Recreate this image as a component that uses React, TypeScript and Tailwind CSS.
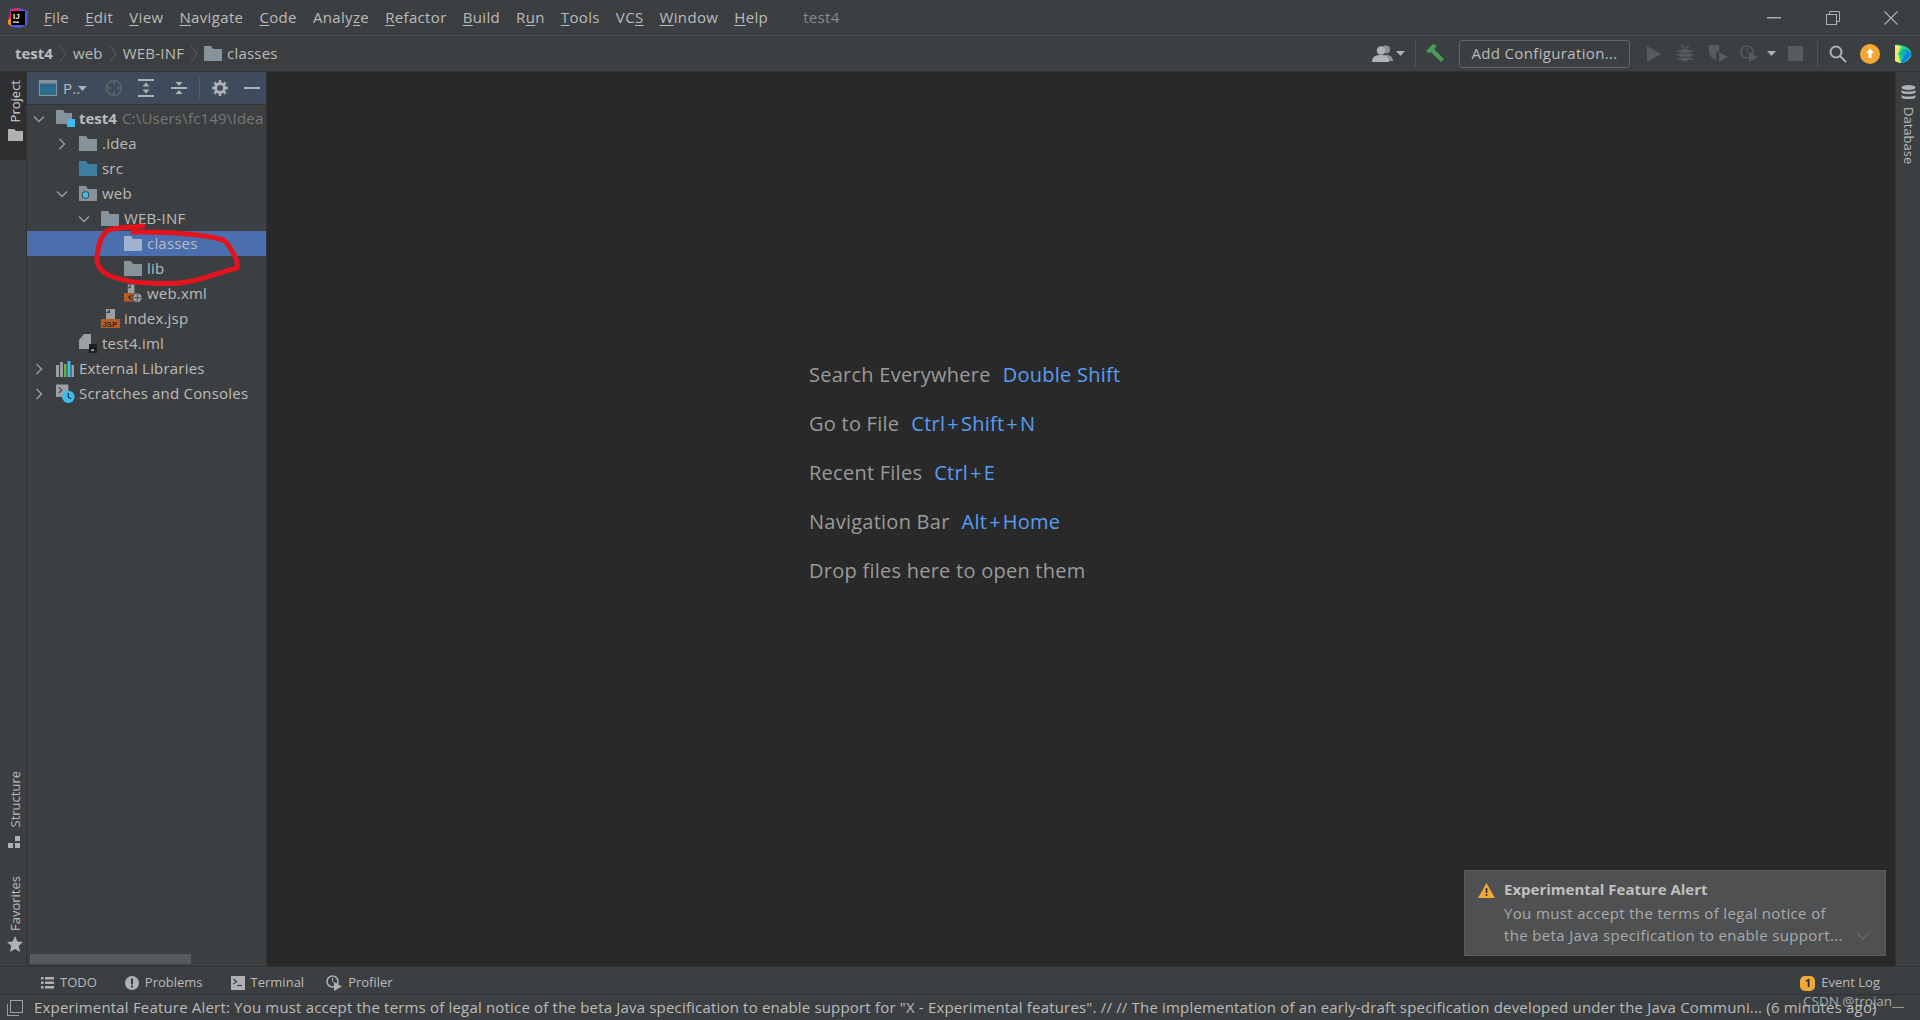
const font = { fontFamily: '"Open Sans", "Noto Sans", sans-serif' };

const Folder = ({ color = "#87939a", className = "" }: { color?: string; className?: string }) => (
  <svg width="18" height="15" viewBox="0 0 18 15" className={className}>
    <path d="M0 0h7l2 3h9v12H0z" fill={color} />
  </svg>
);

const Chevron = ({ open }: { open?: boolean }) => (
  <svg width="16" height="16" viewBox="0 0 16 16" fill="none" stroke="#9da0a2" strokeWidth="1.4">
    {open ? <path d="M3 5.5l5 5 5-5" /> : <path d="M5.5 3l5 5-5 5" />}
  </svg>
);

function Menu({ pre, u, post }: { pre?: string; u: string; post?: string }) {
  return (
    <span className="mr-[16px]">
      {pre}
      <span className="underline underline-offset-2">{u}</span>
      {post}
    </span>
  );
}

function LogoIJ() {
  return (
    <svg width="22" height="22" viewBox="0 0 22 22">
      <path d="M3 2l9-1 9 3-1 14-7 3-9-1z" fill="#4f5bd5" />
      <path d="M1 14L4 2l9-1-1 6-6 9-3 2z" fill="#e6246b" />
      <path d="M1 13l4-2 1 6-2 2-3-2z" fill="#f68a26" />
      <rect x="4" y="4" width="14" height="14" fill="#000" />
      <text x="6" y="12" fontSize="7.5" fontWeight="700" fill="#fff" fontFamily="Liberation Sans">IJ</text>
      <rect x="6" y="14.5" width="6" height="1.2" fill="#fff" />
    </svg>
  );
}

function ProjectIcon() {
  return (
    <svg width="19" height="17" viewBox="0 0 19 17">
      <path d="M0 0h7l2 3h7v11H0z" fill="#87939a" />
      <rect x="11" y="9" width="8" height="8" fill="#3dbdeb" />
    </svg>
  );
}

function WebFolder() {
  return (
    <svg width="18" height="15" viewBox="0 0 18 15">
      <path d="M0 0h7l2 3h9v12H0z" fill="#87939a" />
      <circle cx="6.5" cy="9" r="3.5" fill="#3dbdeb" stroke="#3c3f41" strokeWidth="1" />
    </svg>
  );
}

function XmlIcon() {
  return (
    <svg width="20" height="20" viewBox="0 0 20 20">
      <path d="M4 0h7v9H4z" fill="#9da0a2" />
      <path d="M7 0v4H4z" fill="#3c3f41" />
      <rect x="0" y="9" width="14" height="9" fill="#b85c23" />
      <path d="M8 11l-3 2.5L8 16" stroke="#2e2e2e" strokeWidth="1.3" fill="none" />
      <circle cx="14" cy="14" r="5" fill="#9da0a2" stroke="#3c3f41" />
      <path d="M10 14h8M14 10v8" stroke="#3c3f41" strokeWidth="0.8" />
    </svg>
  );
}

function JspIcon() {
  return (
    <svg width="19" height="20" viewBox="0 0 19 20">
      <path d="M5 0h9v10H5z" fill="#9da0a2" />
      <path d="M9 0v4H5z" fill="#3c3f41" />
      <rect x="0" y="10" width="19" height="9" fill="#b85c23" />
      <text x="1.5" y="17.6" fontSize="7.5" fontWeight="700" fill="#2b2b2b" fontFamily="Liberation Sans">JSP</text>
    </svg>
  );
}

function ImlIcon() {
  return (
    <svg width="18" height="19" viewBox="0 0 18 19">
      <path d="M5 0h7v15H0V6z" fill="#9da0a2" />
      <rect x="10" y="10" width="8" height="9" fill="#1e1e1e" />
      <rect x="12" y="15.5" width="3" height="1.2" fill="#ddd" />
    </svg>
  );
}

function LibIcon() {
  return (
    <svg width="18" height="16" viewBox="0 0 18 16">
      <rect x="0" y="4" width="3" height="12" fill="#9da0a2" />
      <rect x="4" y="1" width="3" height="15" fill="#9da0a2" />
      <rect x="8" y="3" width="2.5" height="13" fill="#62b543" />
      <rect x="11.5" y="0" width="3" height="16" fill="#3dbdeb" />
      <rect x="15.5" y="4" width="2.5" height="12" fill="#9da0a2" />
    </svg>
  );
}

function ScratchIcon() {
  return (
    <svg width="20" height="20" viewBox="0 0 20 20">
      <rect x="0" y="0" width="13" height="13" fill="#9da0a2" />
      <path d="M3 3l3 3-3 3" stroke="#3c3f41" strokeWidth="1.2" fill="none" />
      <circle cx="13" cy="13" r="6.5" fill="#3dbdeb" />
      <path d="M13 9v4.5l3 1.5" stroke="#1e3a4a" strokeWidth="1.3" fill="none" />
    </svg>
  );
}

type Row = { pl: string; label: string; open?: boolean; arrow?: boolean; icon: React.ReactNode; selected?: boolean; bold?: boolean; hint?: string };

const rows: Row[] = [
  { pl: "pl-[4px]", label: "test4", arrow: true, open: true, icon: <ProjectIcon />, bold: true, hint: "C:\\Users\\fc149\\Idea" },
  { pl: "pl-[27px]", label: ".idea", arrow: true, icon: <Folder /> },
  { pl: "pl-[27px]", label: "src", icon: <Folder color="#3d7f9e" /> },
  { pl: "pl-[27px]", label: "web", arrow: true, open: true, icon: <WebFolder /> },
  { pl: "pl-[49px]", label: "WEB-INF", arrow: true, open: true, icon: <Folder /> },
  { pl: "pl-[72px]", label: "classes", icon: <Folder color="#a0b2cf" />, selected: true },
  { pl: "pl-[72px]", label: "lib", icon: <Folder /> },
  { pl: "pl-[72px]", label: "web.xml", icon: <XmlIcon /> },
  { pl: "pl-[49px]", label: "index.jsp", icon: <JspIcon /> },
  { pl: "pl-[27px]", label: "test4.iml", icon: <ImlIcon /> },
  { pl: "pl-[4px]", label: "External Libraries", arrow: true, icon: <LibIcon /> },
  { pl: "pl-[4px]", label: "Scratches and Consoles", arrow: true, icon: <ScratchIcon /> },
];

function TreeRow({ row }: { row: Row }) {
  return (
    <div className={`flex h-[25px] items-center whitespace-nowrap overflow-hidden ${row.pl} ${row.selected ? "bg-[#4b6eaf]" : ""}`}>
      <span className="w-[16px] mr-[9px] shrink-0 flex">{row.arrow && <Chevron open={row.open} />}</span>
      <span className="w-[19px] mr-[4px] shrink-0 flex items-center">{row.icon}</span>
      <span className={row.bold ? "font-bold tracking-normal" : ""}>{row.label}</span>
      {row.hint && <span className="ml-[5px] text-[#787878]">{row.hint}</span>}
    </div>
  );
}

function Hint({ label, keys }: { label: string; keys?: string }) {
  return (
    <div className="h-[49px] leading-[49px] text-[20px] tracking-[0.25px] text-[#9a9a9a] whitespace-nowrap">
      {label}
      {keys && (
        <span className="ml-[12px] text-[#589df6]">
          {keys.split("+").map((part, i) => (
            <span key={part}>
              {i > 0 && <span className="px-[2px]">+</span>}
              {part}
            </span>
          ))}
        </span>
      )}
    </div>
  );
}

function BottomTool({ icon, label, className }: { icon: React.ReactNode; label: string; className: string }) {
  return (
    <div className={`flex items-center gap-[6px] ${className}`}>
      {icon}
      <span>{label}</span>
    </div>
  );
}

const Drop = ({ color = "#afb1b3" }: { color?: string }) => (
  <svg width="9" height="5" viewBox="0 0 9 5"><path d="M0 0h9L4.5 5z" fill={color} /></svg>
);

export default function App() {
  return (
    <div style={font} className="relative w-[1920px] h-[1020px] flex flex-col overflow-hidden bg-[#3c3f41] text-[#bbbbbb] text-[15px] tracking-[0.2px]">
      {/* title bar */}
      <div className="h-[36px] shrink-0 flex items-center border-b border-[#515151] pl-[7px] tracking-[0.35px]">
        <span className="mr-[15px] flex"><LogoIJ /></span>
        <Menu u="F" post="ile" />
        <Menu u="E" post="dit" />
        <Menu u="V" post="iew" />
        <Menu u="N" post="avigate" />
        <Menu u="C" post="ode" />
        <Menu pre="Analy" u="z" post="e" />
        <Menu u="R" post="efactor" />
        <Menu u="B" post="uild" />
        <Menu pre="R" u="u" post="n" />
        <Menu u="T" post="ools" />
        <Menu pre="VC" u="S" />
        <Menu u="W" post="indow" />
        <Menu u="H" post="elp" />
        <span className="ml-[19px] text-[#8a8a8a]">test4</span>
        <div className="ml-auto flex items-center">
          <svg width="14" height="2" className="mr-[45px]"><rect width="14" height="1.4" fill="#b0b0b0" /></svg>
          <svg width="14" height="14" viewBox="0 0 14 14" fill="none" stroke="#b0b0b0" className="mr-[44px]">
            <rect x="0.5" y="3.5" width="10" height="10" />
            <path d="M3.5 3.5v-3h10v10h-3" />
          </svg>
          <svg width="14" height="14" viewBox="0 0 14 14" stroke="#b0b0b0" strokeWidth="1.1" className="mr-[22px]">
            <path d="M0.5 0.5l13 13M13.5 0.5l-13 13" />
          </svg>
        </div>
      </div>

      {/* navigation bar */}
      <div className="h-[36px] shrink-0 flex items-center border-b border-[#323232] pl-[15px] pr-[8px]">
        <span className="font-bold tracking-normal">test4</span>
        <svg width="8" height="20" viewBox="0 0 8 20" fill="none" stroke="#5d6062" className="mx-[6px]"><path d="M1 2l6 8-6 8" /></svg>
        <span>web</span>
        <svg width="8" height="20" viewBox="0 0 8 20" fill="none" stroke="#5d6062" className="mx-[6px]"><path d="M1 2l6 8-6 8" /></svg>
        <span>WEB-INF</span>
        <svg width="8" height="20" viewBox="0 0 8 20" fill="none" stroke="#5d6062" className="mx-[6px]"><path d="M1 2l6 8-6 8" /></svg>
        <Folder className="mr-[5px]" />
        <span>classes</span>

        <div className="ml-auto flex items-center">
          <svg width="23" height="17" viewBox="0 0 23 17" className="mr-[1px]">
            <circle cx="14" cy="4.500" r="4" fill="#8f9193" />
            <path d="M8 16c0-5 3-6 6-6s7 1 7 6z" fill="#8f9193" />
            <circle cx="9" cy="5.500" r="4.200" fill="#afb1b3" />
            <path d="M0 17c0-6 4-7 9-7s8 1 8 7z" fill="#afb1b3" />
          </svg>
          <Drop />
          <span className="w-px h-[26px] bg-[#515151] mx-[10px]" />
          <svg width="19" height="19" viewBox="0 0 19 19" className="mr-[14px]">
            <path d="M0 7L7 0l4 2-3 3 10 10-3 3L5 8 3 9z" fill="#499c54" />
          </svg>
          <div className="w-[171px] h-[28px] border border-[#646464] rounded-[3px] flex items-center justify-center mr-[17px] tracking-[0.35px]">
            Add Configuration...
          </div>
          <svg width="14" height="16" viewBox="0 0 14 16" className="mr-[16px]"><path d="M0 0l14 8-14 8z" fill="#585a5c" /></svg>
          <svg width="16" height="17" viewBox="0 0 16 17" className="mr-[16px]">
            <ellipse cx="8" cy="10" rx="5.500" ry="6.500" fill="#585a5c" />
            <path d="M0 6h16M0 10h16M0 14h16M4 0l3 3M12 0L9 3" stroke="#585a5c" strokeWidth="1.400" />
            <path d="M3 8.200h10M3 12.200h10" stroke="#3c3f41" strokeWidth="0.900" />
          </svg>
          <svg width="19" height="17" viewBox="0 0 19 17" className="mr-[12px]">
            <path d="M0 0h10v6l-3 1v8C3 14 0 10 0 6z" fill="#585a5c" />
            <path d="M10 7l9 5-9 5z" fill="#585a5c" />
          </svg>
          <svg width="18" height="17" viewBox="0 0 18 17" fill="none" className="mr-[9px]">
            <circle cx="7" cy="7" r="6" stroke="#585a5c" strokeWidth="1.600" />
            <path d="M7 3v4l2 2" stroke="#585a5c" />
            <path d="M9 7l9 5-9 5z" fill="#585a5c" />
          </svg>
          <Drop />
          <svg width="15" height="15" className="ml-[12px] mr-[14px]"><rect width="15" height="15" fill="#585a5c" /></svg>
          <span className="w-px h-[26px] bg-[#515151] mr-[11px]" />
          <svg width="18" height="18" viewBox="0 0 18 18" fill="none" stroke="#afb1b3" strokeWidth="2" className="mr-[13px]">
            <circle cx="7" cy="7" r="5.500" />
            <path d="M11 11l6 6" />
          </svg>
          <svg width="20" height="20" viewBox="0 0 20 20" className="mr-[14px]">
            <circle cx="10" cy="10" r="10" fill="#f4a732" />
            <path d="M10 4.500l4 4.500h-2.500v5h-3V9H6z" fill="#fff" />
          </svg>
          <svg width="18" height="20" viewBox="0 0 18 20">
            <path d="M1 1C5 0 12 2 15 5c3 3 3 7 1 9-2 3-6 5-9 5C4 19 1 17 1 17z" fill="#21d789" />
            <path d="M1 1c3 0 5 1 6 2L4 10l3 9c-2 0-6-2-6-2z" fill="#f5e663" />
            <path d="M9 5c3 0 6 1 8 5-1 3-5 8-10 9 2-4 3-9 2-14z" fill="#087cfa" />
            <path d="M5 9l6-4 2 4-4 5z" fill="#12b5a0" />
          </svg>
        </div>
      </div>

      {/* middle */}
      <div className="flex-1 min-h-0 flex">
        <div className="w-[27px] shrink-0 border-r border-[#323232] flex flex-col items-center tracking-normal">
          <div className="w-full h-[88px] bg-[#2d2f30] flex flex-col items-center pt-[8px] pl-[4px] text-[#d0d0d0]">
            <span className="[writing-mode:vertical-rl] rotate-180 text-[13px] leading-none">Project</span>
            <svg width="15" height="12" viewBox="0 0 15 12" className="mt-[7px]"><path d="M0 0h6l2 2h7v10H0z" fill="#afb1b3" /></svg>
          </div>
          <span className="mt-[611px] pr-[4px] [writing-mode:vertical-rl] rotate-180 text-[13px] leading-none">Structure</span>
          <svg width="13" height="12" viewBox="0 0 13 12" className="mt-[8px] ml-[3px]">
            <rect x="7" y="0" width="5" height="5" fill="#afb1b3" />
            <rect x="0" y="7" width="5" height="5" fill="#afb1b3" />
            <rect x="7" y="7" width="5" height="5" fill="#afb1b3" />
          </svg>
          <span className="mt-[28px] pr-[4px] [writing-mode:vertical-rl] rotate-180 text-[13px] leading-none">Favorites</span>
          <svg width="16" height="16" viewBox="0 0 16 16" className="mt-[6px] ml-[3px]">
            <path d="M8 0l2.400 5.400 5.600.6-4.200 3.800L13 16l-5-3-5 3 1.200-6.200L0 6l5.600-.6z" fill="#afb1b3" />
          </svg>
        </div>

        <div className="w-[240px] shrink-0 border-r border-[#323232] flex flex-col relative">
          <div className="h-[33px] shrink-0 bg-[#3d4b5c] border-b border-[#323232] flex items-center pl-[12px]">
            <svg width="18" height="16" viewBox="0 0 18 16" className="mr-[6px]">
              <rect x="0.500" y="0.500" width="17" height="15" fill="#2c6b8e" stroke="#87939a" />
              <rect x="1" y="1" width="16" height="2.500" fill="#87939a" />
            </svg>
            <span>P..</span>
            <span className="-ml-[3px]"><Drop /></span>
            <svg width="18" height="18" viewBox="0 0 18 18" fill="none" stroke="#5f6466" strokeWidth="1.600" className="ml-[18px]">
              <circle cx="9" cy="9" r="7.500" />
              <path d="M9 1v5M9 12v5M1 9h5M12 9h5" />
            </svg>
            <svg width="16" height="18" viewBox="0 0 16 18" className="ml-[15px]">
              <path d="M0 0h16v2H0zM0 16h16v2H0zM8 3.500l3.500 4h-7zM8 14.500l-3.500-4h7z" fill="#afb1b3" />
            </svg>
            <svg width="16" height="16" viewBox="0 0 16 16" className="ml-[17px]">
              <path d="M0 7h16v2H0zM8 6L4.500 2h7zM8 10l3.500 4h-7z" fill="#afb1b3" />
            </svg>
            <span className="w-px h-[24px] bg-[#50596a] ml-[12px]" />
            <svg width="16" height="16" viewBox="0 0 16 16" className="ml-[12px]">
              <circle cx="8" cy="8" r="4.500" fill="none" stroke="#afb1b3" strokeWidth="3" />
              <path d="M8 0v3M8 13v3M0 8h3M13 8h3M2.300 2.300l2 2M11.700 11.700l2 2M13.700 2.300l-2 2M4.300 11.700l-2 2" stroke="#afb1b3" strokeWidth="2.400" />
            </svg>
            <svg width="16" height="2" className="ml-[16px]"><rect width="16" height="2" fill="#afb1b3" /></svg>
          </div>
          <div className="pt-[1px] overflow-hidden">
            {rows.map((row) => (
              <TreeRow key={row.label} row={row} />
            ))}
          </div>
          <div className="mt-auto ml-[3px] mb-[2px] w-[161px] h-[10px] bg-[#585a5c]" />
        </div>

        <div className="flex-1 min-w-0 relative bg-[#292929] pt-[278px] pl-[542px]">
          <Hint label="Search Everywhere" keys="Double Shift" />
          <Hint label="Go to File" keys="Ctrl+Shift+N" />
          <Hint label="Recent Files" keys="Ctrl+E" />
          <Hint label="Navigation Bar" keys="Alt+Home" />
          <Hint label="Drop files here to open them" />

          <div className="absolute right-[9px] bottom-[10px] w-[422px] h-[86px] bg-[#4e5052] border border-[#5a5c5e] pl-[39px] pt-[8px]">
            <svg width="17" height="15" viewBox="0 0 17 15" className="absolute left-[13px] top-[12px]">
              <path d="M8.500 0L17 15H0z" fill="#f2a73b" />
              <rect x="7.700" y="5" width="1.600" height="5" fill="#2b2b2b" />
              <rect x="7.700" y="11" width="1.600" height="1.800" fill="#2b2b2b" />
            </svg>
            <div className="font-bold leading-[20px] text-[#c0c0c0] tracking-normal">Experimental Feature Alert</div>
            <div className="mt-[4px] leading-[21px] text-[#a9abad] whitespace-nowrap tracking-[0.35px]">You must accept the terms of legal notice of</div>
            <div className="mt-[1px] leading-[21px] text-[#a9abad] whitespace-nowrap tracking-[0.35px]">the beta Java specification to enable support...</div>
            <svg width="14" height="8" viewBox="0 0 14 8" fill="none" stroke="#686a6c" strokeWidth="1.400" className="absolute right-[15px] bottom-[15px]">
              <path d="M1 1l6 6 6-6" />
            </svg>
          </div>
        </div>

        <div className="w-[25px] shrink-0 border-l border-[#323232] flex flex-col items-center pt-[13px] tracking-normal">
          <svg width="15" height="15" viewBox="0 0 15 15">
            <ellipse cx="7.500" cy="2.500" rx="7" ry="2.500" fill="#afb1b3" />
            <path d="M0.500 5c1 2 13 2 14 0v2.500c-1 2-13 2-14 0zM0.500 10c1 2 13 2 14 0v2.500c-1 2-13 2-14 0z" fill="#afb1b3" />
          </svg>
          <span className="mt-[7px] [writing-mode:vertical-rl] text-[13px] leading-none">Database</span>
        </div>
      </div>

      {/* bottom tool window bar */}
      <div className="h-[28px] shrink-0 border-t border-[#323232] flex items-center pt-[5px] text-[13px] tracking-normal">
        <BottomTool
          className="ml-[41px] mr-[28px]"
          label="TODO"
          icon={
            <svg width="13" height="12" viewBox="0 0 13 12">
              <path d="M0 0h2.500v2.500H0zM4 0h9v2.500H4zM0 4.500h2.500V7H0zM4 4.500h9V7H4zM0 9h2.500v2.500H0zM4 9h9v2.500H4z" fill="#afb1b3" />
            </svg>
          }
        />
        <BottomTool
          className="mr-[28px]"
          label="Problems"
          icon={
            <svg width="14" height="14" viewBox="0 0 14 14">
              <circle cx="7" cy="7" r="7" fill="#afb1b3" />
              <rect x="6" y="2.500" width="2" height="6" fill="#3c3f41" />
              <rect x="6" y="9.500" width="2" height="2" fill="#3c3f41" />
            </svg>
          }
        />
        <BottomTool
          className="mr-[22px]"
          label="Terminal"
          icon={
            <svg width="14" height="14" viewBox="0 0 14 14">
              <rect width="14" height="14" fill="#afb1b3" />
              <path d="M2.500 3l3 2.500-3 2.500" stroke="#3c3f41" strokeWidth="1.200" fill="none" />
              <path d="M6 9.500h5" stroke="#3c3f41" strokeWidth="1.200" />
            </svg>
          }
        />
        <BottomTool
          className=""
          label="Profiler"
          icon={
            <svg width="16" height="16" viewBox="0 0 16 16" fill="none">
              <circle cx="6.500" cy="6.500" r="5.500" stroke="#afb1b3" strokeWidth="1.500" />
              <path d="M6.500 3v3.500L8.500 8" stroke="#afb1b3" />
              <path d="M8 7l8 4.500L8 16z" fill="#afb1b3" />
            </svg>
          }
        />
        <div className="ml-auto mr-[40px] flex items-center gap-[6px]">
          <span className="w-[15px] h-[15px] rounded-[5px] bg-[#f2a73b] text-[#2b2b2b] text-[11px] font-bold flex items-center justify-center">1</span>
          <span>Event Log</span>
        </div>
      </div>

      {/* status bar */}
      <div className="h-[26px] shrink-0 border-t border-[#323232] flex items-center pl-[7px] whitespace-nowrap overflow-hidden tracking-[0.18px]">
        <svg width="16" height="16" viewBox="0 0 16 16" fill="none" stroke="#9da0a2" className="mr-[11px] shrink-0">
          <rect x="3.500" y="0.500" width="12" height="12" />
          <path d="M0.500 4v11.500H12" />
        </svg>
        <span>Experimental Feature Alert: You must accept the terms of legal notice of the beta Java specification to enable support for "X - Experimental features". // // The implementation of an early-draft specification developed under the Java Communi... (6 minutes ago)</span>
      </div>

      {/* csdn watermark */}
      <span className="absolute left-[1803px] top-[991px] text-[13.500px] tracking-normal text-[#c8c8c8]/80">CSDN @trojan__</span>

      {/* hand drawn circle */}
      <svg width="170" height="70" viewBox="0 0 170 70" fill="none" stroke="#e3141e" strokeWidth="5" strokeLinecap="round" className="absolute left-[90px] top-[222px]">
        <path d="M53 4C38 6 24 5 17 9 10 14 8 25 7 35c-1 10 7 17 16 20 12 4 25 6 37 6 15 1 25 1 37-1 18-3 33-10 50-14 1-6-1-11-4-15-3-6-6-11-10-13-13-4-25-5-36-6-17-2-37-2-54-2" />
      </svg>
    </div>
  );
}
